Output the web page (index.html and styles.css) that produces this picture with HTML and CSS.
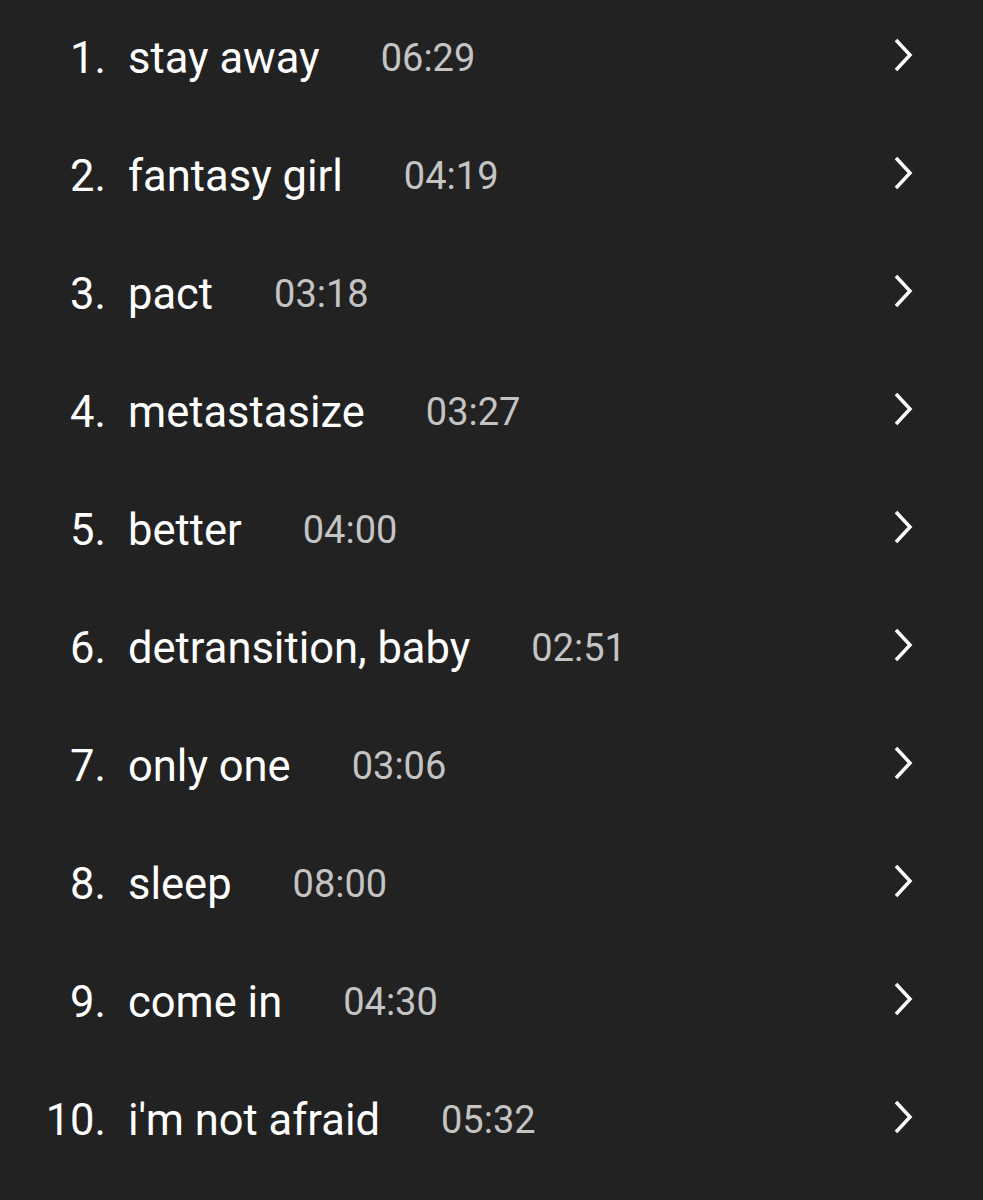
FILE: index.html
```html
<!DOCTYPE html>
<html lang="en">
<head>
    <meta charset="UTF-8">
    <meta name="viewport" content="width=device-width, initial-scale=1.0">
    <title>Tracklist</title>
    <link rel="stylesheet" href="styles.css">
</head>
<body>
    <ul class="tracklist">
        <li class="track">
            <span class="num">1.</span>
            <span class="title">stay away</span>
            <span class="time">06:29</span>
            <svg class="chevron" viewBox="0 0 20 36"><path d="M3 3 L17 18 L3 33"/></svg>
        </li>
        <li class="track">
            <span class="num">2.</span>
            <span class="title">fantasy girl</span>
            <span class="time">04:19</span>
            <svg class="chevron" viewBox="0 0 20 36"><path d="M3 3 L17 18 L3 33"/></svg>
        </li>
        <li class="track">
            <span class="num">3.</span>
            <span class="title">pact</span>
            <span class="time">03:18</span>
            <svg class="chevron" viewBox="0 0 20 36"><path d="M3 3 L17 18 L3 33"/></svg>
        </li>
        <li class="track">
            <span class="num">4.</span>
            <span class="title">metastasize</span>
            <span class="time">03:27</span>
            <svg class="chevron" viewBox="0 0 20 36"><path d="M3 3 L17 18 L3 33"/></svg>
        </li>
        <li class="track">
            <span class="num">5.</span>
            <span class="title">better</span>
            <span class="time">04:00</span>
            <svg class="chevron" viewBox="0 0 20 36"><path d="M3 3 L17 18 L3 33"/></svg>
        </li>
        <li class="track">
            <span class="num">6.</span>
            <span class="title">detransition, baby</span>
            <span class="time">02:51</span>
            <svg class="chevron" viewBox="0 0 20 36"><path d="M3 3 L17 18 L3 33"/></svg>
        </li>
        <li class="track">
            <span class="num">7.</span>
            <span class="title">only one</span>
            <span class="time">03:06</span>
            <svg class="chevron" viewBox="0 0 20 36"><path d="M3 3 L17 18 L3 33"/></svg>
        </li>
        <li class="track">
            <span class="num">8.</span>
            <span class="title">sleep</span>
            <span class="time">08:00</span>
            <svg class="chevron" viewBox="0 0 20 36"><path d="M3 3 L17 18 L3 33"/></svg>
        </li>
        <li class="track">
            <span class="num">9.</span>
            <span class="title">come in</span>
            <span class="time">04:30</span>
            <svg class="chevron" viewBox="0 0 20 36"><path d="M3 3 L17 18 L3 33"/></svg>
        </li>
        <li class="track">
            <span class="num">10.</span>
            <span class="title">i'm not afraid</span>
            <span class="time">05:32</span>
            <svg class="chevron" viewBox="0 0 20 36"><path d="M3 3 L17 18 L3 33"/></svg>
        </li>
    </ul>
</body>
</html>
```

FILE: styles.css
```css
body {
    margin: 0;
    padding: 0;
    background-color: #222222;
    font-family: Roboto, "Liberation Sans", sans-serif;
    color: #ffffff;
    height: 1200px;
    overflow: hidden;
}

.tracklist {
    list-style: none;
    margin: -1px 0 0 0;
    padding: 0;
}

.track {
    display: flex;
    align-items: center;
    height: 118px;
    padding-right: 70px;
}

.num {
    width: 106px;
    text-align: right;
    font-size: 43.5px;
}

.title {
    margin-left: 22px;
    font-size: 43.5px;
}

.time {
    margin-left: 61px;
    font-size: 38px;
    color: #c4c4c4;
}

.chevron {
    margin-left: auto;
    margin-top: -6px;
    width: 20px;
    height: 36px;
    fill: none;
    stroke: #ffffff;
    stroke-width: 3.5;
}
```
